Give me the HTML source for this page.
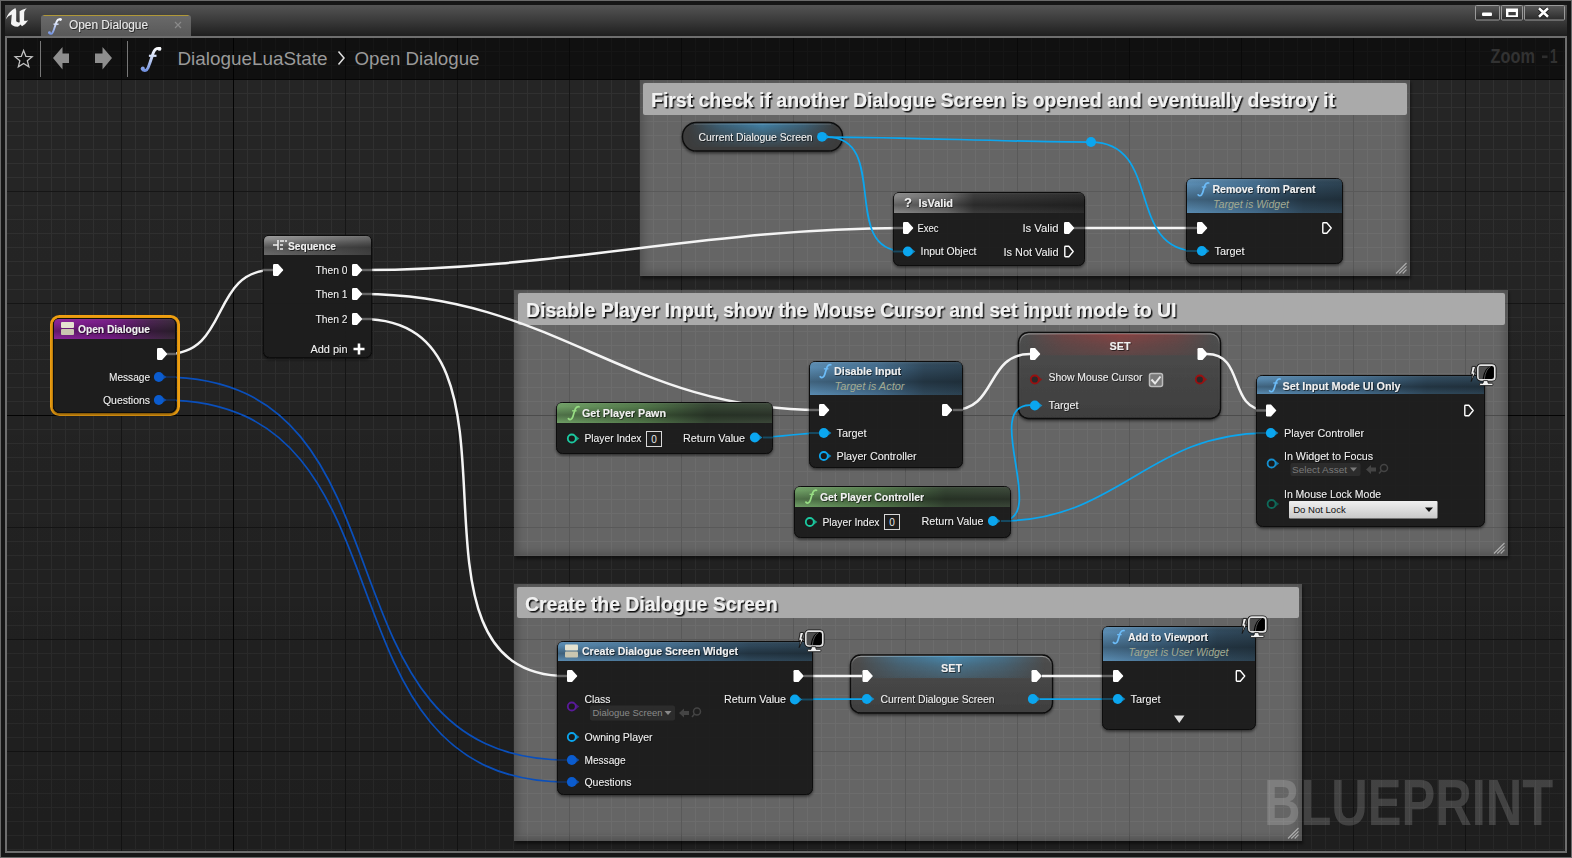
<!DOCTYPE html>
<html><head><meta charset="utf-8"><title>Open Dialogue</title>
<style>html,body{margin:0;padding:0;background:#161616;overflow:hidden;width:1572px;height:858px}svg{display:block;font-family:"Liberation Sans",sans-serif}</style>
</head><body><svg width="1572" height="858" viewBox="0 0 1572 858" font-family="Liberation Sans, sans-serif"><defs>
<filter id="tshadow" x="-5%" y="-30%" width="110%" height="160%"><feDropShadow dx="0.8" dy="0.8" stdDeviation="0.35" flood-color="#000" flood-opacity="0.7"/></filter>
<filter id="cshadow" x="-5%" y="-30%" width="110%" height="160%"><feDropShadow dx="1.5" dy="1.5" stdDeviation="0.15" flood-color="#000" flood-opacity="0.9"/></filter>
<filter id="blur4" x="-10%" y="-10%" width="120%" height="120%"><feGaussianBlur stdDeviation="4"/></filter>
<filter id="blur2" x="-10%" y="-10%" width="120%" height="130%"><feGaussianBlur stdDeviation="1.5"/></filter>
<filter id="nshadow" x="-10%" y="-10%" width="120%" height="130%"><feDropShadow dx="0" dy="1.5" stdDeviation="1.5" flood-color="#000" flood-opacity="0.6"/></filter>
<linearGradient id="titlebg" x1="0" y1="0" x2="0" y2="1"><stop offset="0" stop-color="#545454"/><stop offset="0.5" stop-color="#3a3a3a"/><stop offset="1" stop-color="#1e1e1e"/></linearGradient>
<linearGradient id="tabbg" x1="0" y1="0" x2="0" y2="1"><stop offset="0" stop-color="#6a6a6a"/><stop offset="1" stop-color="#595959"/></linearGradient>
<linearGradient id="graphshade" x1="0" y1="0" x2="0" y2="1"><stop offset="0" stop-color="#000" stop-opacity="0"/><stop offset="0.15" stop-color="#000" stop-opacity="0"/><stop offset="0.5" stop-color="#000" stop-opacity="0.07"/><stop offset="1" stop-color="#000" stop-opacity="0.2"/></linearGradient>
<linearGradient id="btnbg" x1="0" y1="0" x2="0" y2="1"><stop offset="0" stop-color="#5a5a5a"/><stop offset="1" stop-color="#2a2a2a"/></linearGradient>
<linearGradient id="fgradL" gradientUnits="userSpaceOnUse" x1="0" y1="0" x2="0" y2="24"><stop offset="0" stop-color="#ffffff"/><stop offset="0.4" stop-color="#d0dbf6"/><stop offset="1" stop-color="#7090e0"/></linearGradient>
<linearGradient id="fgrad" x1="0" y1="0" x2="0" y2="1"><stop offset="0" stop-color="#ffffff"/><stop offset="1" stop-color="#7f9fe8"/></linearGradient>
<linearGradient id="hdr_purple" x1="0" y1="0" x2="1" y2="0"><stop offset="0" stop-color="#8a249a"/><stop offset="0.5" stop-color="#741c84"/><stop offset="0.8" stop-color="#4a2450"/><stop offset="1" stop-color="#3a2a3c"/></linearGradient>
<linearGradient id="hdr_gray" x1="0" y1="0" x2="1" y2="1"><stop offset="0" stop-color="#9a9a9a"/><stop offset="0.5" stop-color="#6a6a6a"/><stop offset="1" stop-color="#3e3e3e"/></linearGradient>
<linearGradient id="hdr_isvalid" x1="0" y1="0" x2="1" y2="0"><stop offset="0" stop-color="#8a8a8a"/><stop offset="0.28" stop-color="#6a6a6a"/><stop offset="0.42" stop-color="#3c3c3c"/><stop offset="1" stop-color="#2c2c2c"/></linearGradient>
<linearGradient id="hdr_blue" x1="0" y1="0" x2="1" y2="0"><stop offset="0" stop-color="#5a8cb2"/><stop offset="0.45" stop-color="#446c8c"/><stop offset="0.75" stop-color="#30495c"/><stop offset="1" stop-color="#2c4252"/></linearGradient>
<linearGradient id="hdr_green" x1="0" y1="0" x2="1" y2="0"><stop offset="0" stop-color="#70a066"/><stop offset="0.4" stop-color="#52784a"/><stop offset="0.7" stop-color="#364634"/><stop offset="1" stop-color="#3a4638"/></linearGradient>
<linearGradient id="hdr_vshade" x1="0" y1="0" x2="0" y2="1"><stop offset="0" stop-color="#fff" stop-opacity="0.08"/><stop offset="0.15" stop-color="#000" stop-opacity="0"/><stop offset="0.6" stop-color="#000" stop-opacity="0.3"/><stop offset="1" stop-color="#000" stop-opacity="0.0"/></linearGradient>
<radialGradient id="setblue2" cx="0.5" cy="0" r="0.5" gradientTransform="translate(0 0) matrix(1 0 0 1.3 0 0)"><stop offset="0" stop-color="#4aa6dc" stop-opacity="0.95"/><stop offset="0.55" stop-color="#3a88b8" stop-opacity="0.45"/><stop offset="1" stop-color="#2d6a90" stop-opacity="0"/></radialGradient>
<linearGradient id="varbg" x1="0" y1="0" x2="0" y2="1"><stop offset="0" stop-color="#3a3e42"/><stop offset="0.25" stop-color="#3d83b5"/><stop offset="0.6" stop-color="#34495a"/><stop offset="1" stop-color="#2e3236"/></linearGradient>
<radialGradient id="setred" cx="0.5" cy="0" r="0.5" gradientTransform="matrix(1 0 0 0.35 0 0)"><stop offset="0" stop-color="#c04040" stop-opacity="0.75"/><stop offset="1" stop-color="#c04040" stop-opacity="0"/></radialGradient>
<radialGradient id="setblue" cx="0.5" cy="0" r="0.5" gradientTransform="matrix(1 0 0 0.45 0 0)"><stop offset="0" stop-color="#2d9ae0" stop-opacity="0.8"/><stop offset="1" stop-color="#2d9ae0" stop-opacity="0"/></radialGradient>
<linearGradient id="hband_blue" x1="0" y1="0" x2="1" y2="0"><stop offset="0" stop-color="#3d9ad2" stop-opacity="0"/><stop offset="0.22" stop-color="#3d9ad2" stop-opacity="0.42"/><stop offset="0.5" stop-color="#44a4dc" stop-opacity="0.7"/><stop offset="0.78" stop-color="#3d9ad2" stop-opacity="0.42"/><stop offset="1" stop-color="#3d9ad2" stop-opacity="0"/></linearGradient>
<linearGradient id="hband_red" x1="0" y1="0" x2="1" y2="0"><stop offset="0" stop-color="#a83434" stop-opacity="0"/><stop offset="0.2" stop-color="#a83434" stop-opacity="0.35"/><stop offset="0.5" stop-color="#b03a3a" stop-opacity="0.6"/><stop offset="0.8" stop-color="#a83434" stop-opacity="0.35"/><stop offset="1" stop-color="#a83434" stop-opacity="0"/></linearGradient>
<linearGradient id="vfade" x1="0" y1="0" x2="0" y2="1"><stop offset="0" stop-color="#fff" stop-opacity="1"/><stop offset="0.5" stop-color="#fff" stop-opacity="0.6"/><stop offset="1" stop-color="#fff" stop-opacity="0.35"/></linearGradient>
<linearGradient id="vfade2" x1="0" y1="0" x2="0" y2="1"><stop offset="0" stop-color="#fff" stop-opacity="1"/><stop offset="0.45" stop-color="#fff" stop-opacity="0.55"/><stop offset="1" stop-color="#fff" stop-opacity="0.12"/></linearGradient>
<mask id="mvfade2" maskContentUnits="objectBoundingBox"><rect x="0" y="0" width="1" height="1" fill="url(#vfade2)"/></mask>
<mask id="mvfade" maskContentUnits="objectBoundingBox"><rect x="0" y="0" width="1" height="1" fill="url(#vfade)"/></mask>
<linearGradient id="rimgrad" x1="0" y1="0" x2="0" y2="1"><stop offset="0" stop-color="#fff" stop-opacity="0.4"/><stop offset="0.12" stop-color="#fff" stop-opacity="0.05"/><stop offset="1" stop-color="#fff" stop-opacity="0"/></linearGradient>
<linearGradient id="setbody" x1="0" y1="0" x2="0" y2="1"><stop offset="0" stop-color="#4e4e4e"/><stop offset="1" stop-color="#3e3e3e"/></linearGradient>
<linearGradient id="ddbg" x1="0" y1="0" x2="0" y2="1"><stop offset="0" stop-color="#f0f0f0"/><stop offset="1" stop-color="#c8c8c8"/></linearGradient>
<clipPath id="cc640_80"><rect x="640" y="80" width="770" height="196"/></clipPath><clipPath id="cc514_290"><rect x="514" y="290" width="994" height="266"/></clipPath><clipPath id="cc514_584"><rect x="514" y="584" width="788" height="257"/></clipPath></defs><rect x="0" y="0" width="1572" height="858" fill="#161616"/><rect x="0.5" y="0.5" width="1571" height="857" fill="none" stroke="#6a6a6a" stroke-width="1"/><rect x="5" y="5" width="1562" height="31" fill="url(#titlebg)"/><rect x="7" y="38" width="1558" height="813" fill="#252525"/><path id="gridminor" d="M23.5,38V851M37.5,38V851M51.5,38V851M65.5,38V851M79.5,38V851M93.5,38V851M107.5,38V851M121.5,38V851M135.5,38V851M149.5,38V851M163.5,38V851M177.5,38V851M191.5,38V851M205.5,38V851M219.5,38V851M233.5,38V851M247.5,38V851M261.5,38V851M275.5,38V851M289.5,38V851M303.5,38V851M317.5,38V851M331.5,38V851M345.5,38V851M359.5,38V851M373.5,38V851M387.5,38V851M401.5,38V851M415.5,38V851M429.5,38V851M443.5,38V851M457.5,38V851M471.5,38V851M485.5,38V851M499.5,38V851M513.5,38V851M527.5,38V851M541.5,38V851M555.5,38V851M569.5,38V851M583.5,38V851M597.5,38V851M611.5,38V851M625.5,38V851M639.5,38V851M653.5,38V851M667.5,38V851M681.5,38V851M695.5,38V851M709.5,38V851M723.5,38V851M737.5,38V851M751.5,38V851M765.5,38V851M779.5,38V851M793.5,38V851M807.5,38V851M821.5,38V851M835.5,38V851M849.5,38V851M863.5,38V851M877.5,38V851M891.5,38V851M905.5,38V851M919.5,38V851M933.5,38V851M947.5,38V851M961.5,38V851M975.5,38V851M989.5,38V851M1003.5,38V851M1017.5,38V851M1031.5,38V851M1045.5,38V851M1059.5,38V851M1073.5,38V851M1087.5,38V851M1101.5,38V851M1115.5,38V851M1129.5,38V851M1143.5,38V851M1157.5,38V851M1171.5,38V851M1185.5,38V851M1199.5,38V851M1213.5,38V851M1227.5,38V851M1241.5,38V851M1255.5,38V851M1269.5,38V851M1283.5,38V851M1297.5,38V851M1311.5,38V851M1325.5,38V851M1339.5,38V851M1353.5,38V851M1367.5,38V851M1381.5,38V851M1395.5,38V851M1409.5,38V851M1423.5,38V851M1437.5,38V851M1451.5,38V851M1465.5,38V851M1479.5,38V851M1493.5,38V851M1507.5,38V851M1521.5,38V851M1535.5,38V851M1549.5,38V851M1563.5,38V851M7,51.5H1565M7,65.5H1565M7,79.5H1565M7,93.5H1565M7,107.5H1565M7,121.5H1565M7,135.5H1565M7,149.5H1565M7,163.5H1565M7,177.5H1565M7,191.5H1565M7,205.5H1565M7,219.5H1565M7,233.5H1565M7,247.5H1565M7,261.5H1565M7,275.5H1565M7,289.5H1565M7,303.5H1565M7,317.5H1565M7,331.5H1565M7,345.5H1565M7,359.5H1565M7,373.5H1565M7,387.5H1565M7,401.5H1565M7,415.5H1565M7,429.5H1565M7,443.5H1565M7,457.5H1565M7,471.5H1565M7,485.5H1565M7,499.5H1565M7,513.5H1565M7,527.5H1565M7,541.5H1565M7,555.5H1565M7,569.5H1565M7,583.5H1565M7,597.5H1565M7,611.5H1565M7,625.5H1565M7,639.5H1565M7,653.5H1565M7,667.5H1565M7,681.5H1565M7,695.5H1565M7,709.5H1565M7,723.5H1565M7,737.5H1565M7,751.5H1565M7,765.5H1565M7,779.5H1565M7,793.5H1565M7,807.5H1565M7,821.5H1565M7,835.5H1565M7,849.5H1565" stroke="#303030" stroke-width="1"/><path id="gridmajor" d="M121.5,38V851M233.5,38V851M345.5,38V851M457.5,38V851M569.5,38V851M681.5,38V851M793.5,38V851M905.5,38V851M1017.5,38V851M1129.5,38V851M1241.5,38V851M1353.5,38V851M1465.5,38V851M7,79.5H1565M7,191.5H1565M7,303.5H1565M7,415.5H1565M7,527.5H1565M7,639.5H1565M7,751.5H1565M233.5,38V851M7,415.5H1565" stroke="#161616" stroke-width="1"/><path id="gridaxis" d="M233.5,38V851M7,415.5H1565" stroke="#030303" stroke-width="1"/><rect x="7" y="38" width="1558" height="813" fill="url(#graphshade)"/><rect x="6" y="37" width="1560" height="815" fill="none" stroke="#6e6e6e" stroke-width="2"/><rect x="641" y="82" width="770" height="197" fill="#000" opacity="0.45" filter="url(#blur2)"/><rect x="640" y="80" width="770" height="196" fill="#262626"/><use href="#gridminor" clip-path="url(#cc640_80)"/><use href="#gridmajor" clip-path="url(#cc640_80)"/><use href="#gridaxis" clip-path="url(#cc640_80)"/><rect x="640" y="80" width="770" height="196" fill="#ffffff" fill-opacity="0.29"/><g clip-path="url(#cc640_80)"><rect x="636" y="76" width="778" height="204" fill="none" stroke="#000" stroke-opacity="0.22" stroke-width="14" filter="url(#blur4)"/></g><rect x="643" y="83" width="764" height="32" rx="2" fill="#aaaaaa"/><text x="651" y="107" font-size="21" fill="#f2f2f2" font-weight="bold" textLength="684" lengthAdjust="spacingAndGlyphs" filter="url(#cshadow)" >First check if another Dialogue Screen is opened and eventually destroy it</text><path d="M1396.0,273.5 L1406.5,263.0 M1399.3,273.5 L1406.5,266.3 M1402.7,273.5 L1406.5,269.7" stroke="#c8c8c8" stroke-width="1.1" opacity="0.75"/><rect x="515" y="292" width="994" height="267" fill="#000" opacity="0.45" filter="url(#blur2)"/><rect x="514" y="290" width="994" height="266" fill="#262626"/><use href="#gridminor" clip-path="url(#cc514_290)"/><use href="#gridmajor" clip-path="url(#cc514_290)"/><use href="#gridaxis" clip-path="url(#cc514_290)"/><rect x="514" y="290" width="994" height="266" fill="#ffffff" fill-opacity="0.29"/><g clip-path="url(#cc514_290)"><rect x="510" y="286" width="1002" height="274" fill="none" stroke="#000" stroke-opacity="0.22" stroke-width="14" filter="url(#blur4)"/></g><rect x="518" y="293" width="987" height="32" rx="2" fill="#aaaaaa"/><text x="526" y="317" font-size="21" fill="#f2f2f2" font-weight="bold" textLength="650.5" lengthAdjust="spacingAndGlyphs" filter="url(#cshadow)" >Disable Player Input, show the Mouse Cursor and set input mode to UI</text><path d="M1494.0,553.5 L1504.5,543.0 M1497.3,553.5 L1504.5,546.3 M1500.7,553.5 L1504.5,549.7" stroke="#c8c8c8" stroke-width="1.1" opacity="0.75"/><rect x="515" y="586" width="788" height="258" fill="#000" opacity="0.45" filter="url(#blur2)"/><rect x="514" y="584" width="788" height="257" fill="#262626"/><use href="#gridminor" clip-path="url(#cc514_584)"/><use href="#gridmajor" clip-path="url(#cc514_584)"/><use href="#gridaxis" clip-path="url(#cc514_584)"/><rect x="514" y="584" width="788" height="257" fill="#ffffff" fill-opacity="0.29"/><g clip-path="url(#cc514_584)"><rect x="510" y="580" width="796" height="265" fill="none" stroke="#000" stroke-opacity="0.22" stroke-width="14" filter="url(#blur4)"/></g><rect x="517" y="587" width="782" height="31" rx="2" fill="#aaaaaa"/><text x="525" y="611" font-size="21" fill="#f2f2f2" font-weight="bold" textLength="252.5" lengthAdjust="spacingAndGlyphs" filter="url(#cshadow)" >Create the Dialogue Screen</text><path d="M1288.0,838.5 L1298.5,828.0 M1291.3,838.5 L1298.5,831.3 M1294.7,838.5 L1298.5,834.7" stroke="#c8c8c8" stroke-width="1.1" opacity="0.75"/><rect x="682.5" y="122.5" width="160" height="28.5" rx="14" fill="#3c3c3c" fill-opacity="0.95" stroke="#0e0e0e" stroke-width="1.4" filter="url(#nshadow)"/><rect x="688" y="123.2" width="149" height="24" fill="url(#hband_blue)" mask="url(#mvfade2)"/><path d="M694,124.2 H831" stroke="#fff" stroke-opacity="0.15" stroke-width="1"/><text x="698.5" y="141" font-size="10.5" fill="#f0f0f0" textLength="114" lengthAdjust="spacingAndGlyphs" filter="url(#tshadow)" >Current Dialogue Screen</text><path d="M826.2,134.20000000000002 L829.6,136.8 L826.2,139.4 Z" fill="#0ba6ef" opacity="0.75"/><circle cx="822.0" cy="136.8" r="4.9" fill="#0ba6ef"/><rect x="1018.5" y="332.5" width="202" height="86" rx="10" fill="url(#setbody)" fill-opacity="0.94" stroke="#0c0c0c" stroke-width="1.3" filter="url(#nshadow)"/><rect x="1019.8" y="333.8" width="199.4" height="83.4" rx="9" fill="none" stroke="url(#rimgrad)" stroke-width="1.2"/><rect x="1026" y="333.5" width="187" height="22" fill="url(#hband_red)" mask="url(#mvfade)"/><text x="1120" y="350.3" font-size="11" fill="#f0f0f0" font-weight="bold" text-anchor="middle" textLength="21" lengthAdjust="spacingAndGlyphs" filter="url(#tshadow)" >SET</text><path d="M1031.2,348 L1035,348 L1040,353.4 Q1040.5,354 1040,354.6 L1035,360 L1031.2,360 Q1030,360 1030,358.8 L1030,349.2 Q1030,348 1031.2,348 Z" fill="#fff"/><path d="M1198.7,348 L1202.5,348 L1207.5,353.4 Q1208.0,354 1207.5,354.6 L1202.5,360 L1198.7,360 Q1197.5,360 1197.5,358.8 L1197.5,349.2 Q1197.5,348 1198.7,348 Z" fill="#fff"/><path d="M1039,376.9 L1042.4,379.5 L1039,382.1 Z" fill="#9a1010" opacity="0.75"/><circle cx="1034.8" cy="379.5" r="4.0" fill="#2a2a2a" stroke="#9a1010" stroke-width="1.8"/><text x="1048.5" y="381" font-size="10.5" fill="#f0f0f0" textLength="94" lengthAdjust="spacingAndGlyphs" filter="url(#tshadow)" >Show Mouse Cursor</text><rect x="1149.5" y="373.5" width="13" height="13" rx="2" fill="#7a7a7a" stroke="#bdbdbd" stroke-width="1.5"/><path d="M1151.5,379.5 l3.5,4 l5.5,-7" fill="none" stroke="#e8e8e8" stroke-width="2"/><path d="M1204,376.9 L1207.4,379.5 L1204,382.1 Z" fill="#9a1010" opacity="0.75"/><circle cx="1199.8" cy="379.5" r="4.0" fill="#2a2a2a" stroke="#9a1010" stroke-width="1.8"/><path d="M1039,402.9 L1042.4,405.5 L1039,408.1 Z" fill="#0ba6ef" opacity="0.75"/><circle cx="1034.8" cy="405.5" r="4.9" fill="#0ba6ef"/><text x="1048.5" y="409" font-size="10.5" fill="#f0f0f0" textLength="30" lengthAdjust="spacingAndGlyphs" filter="url(#tshadow)" >Target</text><rect x="850.5" y="655" width="202" height="58" rx="10" fill="url(#setbody)" fill-opacity="0.94" stroke="#0c0c0c" stroke-width="1.3" filter="url(#nshadow)"/><rect x="851.8" y="656.3" width="199.4" height="55.4" rx="9" fill="none" stroke="url(#rimgrad)" stroke-width="1.2"/><rect x="858" y="656" width="187" height="22" fill="url(#hband_blue)" mask="url(#mvfade)"/><text x="951.5" y="672.3" font-size="11" fill="#f0f0f0" font-weight="bold" text-anchor="middle" textLength="21" lengthAdjust="spacingAndGlyphs" filter="url(#tshadow)" >SET</text><path d="M863.7,670 L867.5,670 L872.5,675.4 Q873.0,676 872.5,676.6 L867.5,682 L863.7,682 Q862.5,682 862.5,680.8 L862.5,671.2 Q862.5,670 863.7,670 Z" fill="#fff"/><path d="M1032.7,670 L1036.5,670 L1041.5,675.4 Q1042.0,676 1041.5,676.6 L1036.5,682 L1032.7,682 Q1031.5,682 1031.5,680.8 L1031.5,671.2 Q1031.5,670 1032.7,670 Z" fill="#fff"/><path d="M871,696.4 L874.4,699 L871,701.6 Z" fill="#0ba6ef" opacity="0.75"/><circle cx="866.8" cy="699" r="4.9" fill="#0ba6ef"/><text x="880.5" y="703" font-size="10.5" fill="#f0f0f0" textLength="114" lengthAdjust="spacingAndGlyphs" filter="url(#tshadow)" >Current Dialogue Screen</text><path d="M1037,696.4 L1040.4,699 L1037,701.6 Z" fill="#0ba6ef" opacity="0.75"/><circle cx="1032.8" cy="699" r="4.9" fill="#0ba6ef"/><path d="M167,354 C230.33333333333334,354 209.66666666666666,270 273,270" fill="none" stroke="#f4f4f4" stroke-width="2.5" opacity="1.0"/><path d="M362,270 C556.3333333333334,270 708.6666666666666,228 903,228" fill="none" stroke="#f4f4f4" stroke-width="2.5" opacity="1.0"/><path d="M362,294 C553.0,294 628.0,410 819,410" fill="none" stroke="#f4f4f4" stroke-width="2.5" opacity="1.0"/><path d="M362,319 C549.3333333333334,319 379.66666666666663,676 567,676" fill="none" stroke="#f4f4f4" stroke-width="2.5" opacity="1.0"/><path d="M1074,228 C1115.0,228 1156.0,228 1197,228" fill="none" stroke="#f4f4f4" stroke-width="2.5" opacity="1.0"/><path d="M953,410 C997.3333333333334,410 985.6666666666666,354 1030,354" fill="none" stroke="#f4f4f4" stroke-width="2.5" opacity="1.0"/><path d="M1207,354 C1245.3333333333333,354 1227.6666666666667,410 1266,410" fill="none" stroke="#f4f4f4" stroke-width="2.5" opacity="1.0"/><path d="M804,676 C823.3333333333334,676 842.6666666666666,676 862,676" fill="none" stroke="#f4f4f4" stroke-width="2.5" opacity="1.0"/><path d="M1042,676 C1065.6666666666667,676 1089.3333333333333,676 1113,676" fill="none" stroke="#f4f4f4" stroke-width="2.5" opacity="1.0"/><path d="M827,137 C890.3333333333334,137 839.6666666666666,251 903,251" fill="none" stroke="#0ba6ef" stroke-width="1.75" opacity="1.0"/><path d="M827,137 C916.6666666666666,137 1001.3333333333334,142 1091,142" fill="none" stroke="#0ba6ef" stroke-width="1.75" opacity="1.0"/><path d="M1091,142 C1162.6666666666667,142 1125.3333333333333,251 1197,251" fill="none" stroke="#0ba6ef" stroke-width="1.75" opacity="1.0"/><path d="M763,437 C783.0,437 799.0,433 819,433" fill="none" stroke="#0ba6ef" stroke-width="1.75" opacity="1.0"/><path d="M1001,521 C1049.3333333333333,521 981.6666666666666,405 1030,405" fill="none" stroke="#0ba6ef" stroke-width="1.75" opacity="1.0"/><path d="M1001,521 C1118.6666666666667,521 1148.3333333333333,433 1266,433" fill="none" stroke="#0ba6ef" stroke-width="1.75" opacity="1.0"/><path d="M802,699 C822.0,699 842.0,699 862,699" fill="none" stroke="#0ba6ef" stroke-width="1.75" opacity="1.0"/><path d="M1040,699 C1064.3333333333333,699 1088.6666666666667,699 1113,699" fill="none" stroke="#0ba6ef" stroke-width="1.75" opacity="1.0"/><path d="M164,377 C426.0,377 305.0,760 567,760" fill="none" stroke="#0a4fbb" stroke-width="1.75" opacity="1.0"/><path d="M164,400 C425.6666666666667,400 305.3333333333333,782 567,782" fill="none" stroke="#0a4fbb" stroke-width="1.75" opacity="1.0"/><circle cx="1091" cy="142" r="5" fill="#0ba6ef"/><rect x="51.5" y="316.5" width="127" height="98" rx="8" fill="none" stroke="#f0a010" stroke-width="3"/><rect x="53.5" y="318.5" width="122" height="94" rx="6" fill="#1b1c1b" fill-opacity="0.95" stroke="#070707" stroke-width="1" filter="url(#nshadow)"/><path d="M59,319 H170 Q175,319 175,324 V339 H54 V324 Q54,319 59,319 Z" fill="url(#hdr_purple)"/><path d="M59,319 H170 Q175,319 175,324 V339 H54 V324 Q54,319 59,319 Z" fill="url(#hdr_vshade)"/><rect x="61" y="322" width="13" height="6" rx="1" fill="#e4e2d0"/><rect x="61" y="329" width="13" height="6" rx="1" fill="#c9c6b0"/><text x="78" y="333" font-size="11.5" fill="#f0f0f0" font-weight="bold" textLength="72" lengthAdjust="spacingAndGlyphs" filter="url(#tshadow)" >Open Dialogue</text><path d="M158.2,348 L162,348 L167,353.4 Q167.5,354 167,354.6 L162,360 L158.2,360 Q157,360 157,358.8 L157,349.2 Q157,348 158.2,348 Z" fill="#fff"/><path d="M163,374.4 L166.4,377 L163,379.6 Z" fill="#0b5ccf" opacity="0.75"/><circle cx="158.8" cy="377" r="4.9" fill="#0b5ccf"/><path d="M163,397.4 L166.4,400 L163,402.6 Z" fill="#0b5ccf" opacity="0.75"/><circle cx="158.8" cy="400" r="4.9" fill="#0b5ccf"/><text x="150" y="381" font-size="10.5" fill="#f0f0f0" text-anchor="end" textLength="41" lengthAdjust="spacingAndGlyphs" filter="url(#tshadow)" >Message</text><text x="150" y="404" font-size="10.5" fill="#f0f0f0" text-anchor="end" textLength="47" lengthAdjust="spacingAndGlyphs" filter="url(#tshadow)" >Questions</text><rect x="263.5" y="235.5" width="108" height="122" rx="6" fill="#1b1c1b" fill-opacity="0.95" stroke="#070707" stroke-width="1" filter="url(#nshadow)"/><path d="M269,236 H366 Q371,236 371,241 V255 H264 V241 Q264,236 269,236 Z" fill="url(#hdr_gray)"/><path d="M269,236 H366 Q371,236 371,241 V255 H264 V241 Q264,236 269,236 Z" fill="url(#hdr_vshade)"/><text x="288" y="249.5" font-size="11.5" fill="#f0f0f0" font-weight="bold" textLength="48" lengthAdjust="spacingAndGlyphs" filter="url(#tshadow)" >Sequence</text><path d="M273,245h5M278,240v10M280,241h4M280,245h3M280,249h3M285,241h2" stroke="#eee" stroke-width="1.5"/><path d="M274.2,264 L278,264 L283,269.4 Q283.5,270 283,270.6 L278,276 L274.2,276 Q273,276 273,274.8 L273,265.2 Q273,264 274.2,264 Z" fill="#fff"/><path d="M353.2,264 L357,264 L362,269.4 Q362.5,270 362,270.6 L357,276 L353.2,276 Q352,276 352,274.8 L352,265.2 Q352,264 353.2,264 Z" fill="#fff"/><text x="347.5" y="274" font-size="10.5" fill="#f0f0f0" text-anchor="end" textLength="32" lengthAdjust="spacingAndGlyphs" filter="url(#tshadow)" >Then 0</text><path d="M353.2,288 L357,288 L362,293.4 Q362.5,294 362,294.6 L357,300 L353.2,300 Q352,300 352,298.8 L352,289.2 Q352,288 353.2,288 Z" fill="#fff"/><text x="347.5" y="298" font-size="10.5" fill="#f0f0f0" text-anchor="end" textLength="32" lengthAdjust="spacingAndGlyphs" filter="url(#tshadow)" >Then 1</text><path d="M353.2,313 L357,313 L362,318.4 Q362.5,319 362,319.6 L357,325 L353.2,325 Q352,325 352,323.8 L352,314.2 Q352,313 353.2,313 Z" fill="#fff"/><text x="347.5" y="323" font-size="10.5" fill="#f0f0f0" text-anchor="end" textLength="32" lengthAdjust="spacingAndGlyphs" filter="url(#tshadow)" >Then 2</text><text x="347.5" y="353" font-size="10.5" fill="#f0f0f0" text-anchor="end" textLength="37" lengthAdjust="spacingAndGlyphs" filter="url(#tshadow)" >Add pin</text><path d="M359,343.5v11M353.5,349h11" stroke="#fff" stroke-width="2.6"/><rect x="893.5" y="192.5" width="191" height="73" rx="6" fill="#1b1c1b" fill-opacity="0.95" stroke="#070707" stroke-width="1" filter="url(#nshadow)"/><path d="M899,193 H1079 Q1084,193 1084,198 V213 H894 V198 Q894,193 899,193 Z" fill="url(#hdr_isvalid)"/><path d="M899,193 H1079 Q1084,193 1084,198 V213 H894 V198 Q894,193 899,193 Z" fill="url(#hdr_vshade)"/><text x="904" y="207" font-size="13" fill="#eee" font-weight="bold" filter="url(#tshadow)" >?</text><text x="918.5" y="207" font-size="11.5" fill="#f0f0f0" font-weight="bold" textLength="34.5" lengthAdjust="spacingAndGlyphs" filter="url(#tshadow)" >IsValid</text><path d="M904.2,222 L908,222 L913,227.4 Q913.5,228 913,228.6 L908,234 L904.2,234 Q903,234 903,232.8 L903,223.2 Q903,222 904.2,222 Z" fill="#fff"/><text x="917.5" y="232" font-size="10.5" fill="#f0f0f0" textLength="21" lengthAdjust="spacingAndGlyphs" filter="url(#tshadow)" >Exec</text><text x="1058.5" y="232" font-size="10.5" fill="#f0f0f0" text-anchor="end" textLength="36" lengthAdjust="spacingAndGlyphs" filter="url(#tshadow)" >Is Valid</text><path d="M1065.2,222 L1069,222 L1074,227.4 Q1074.5,228 1074,228.6 L1069,234 L1065.2,234 Q1064,234 1064,232.8 L1064,223.2 Q1064,222 1065.2,222 Z" fill="#fff"/><path d="M912,248.9 L915.4,251.5 L912,254.1 Z" fill="#0ba6ef" opacity="0.75"/><circle cx="907.8" cy="251.5" r="4.9" fill="#0ba6ef"/><text x="920.5" y="255" font-size="10.5" fill="#f0f0f0" textLength="56" lengthAdjust="spacingAndGlyphs" filter="url(#tshadow)" >Input Object</text><text x="1058.5" y="255.5" font-size="10.5" fill="#f0f0f0" text-anchor="end" textLength="55" lengthAdjust="spacingAndGlyphs" filter="url(#tshadow)" >Is Not Valid</text><path d="M1065.5,246.3 L1068.8,246.3 L1073.2,251.5 L1068.8,256.7 L1065.5,256.7 Q1064.8,256.7 1064.8,256.0 L1064.8,247.0 Q1064.8,246.3 1065.5,246.3 Z" fill="none" stroke="#fff" stroke-width="1.4" stroke-linejoin="round"/><rect x="1186.5" y="178.5" width="156" height="85" rx="6" fill="#1b1c1b" fill-opacity="0.95" stroke="#070707" stroke-width="1" filter="url(#nshadow)"/><path d="M1192,179 H1337 Q1342,179 1342,184 V213 H1187 V184 Q1187,179 1192,179 Z" fill="url(#hdr_blue)"/><path d="M1192,179 H1337 Q1342,179 1342,184 V213 H1187 V184 Q1187,179 1192,179 Z" fill="url(#hdr_vshade)"/><path d="M1198.1,194.79999999999998 Q1199.7,196.79999999999998 1201.7,194.6 Q1202.7,193.2 1203.5,189.7 L1204.9,185.39999999999998 Q1206.3,182.39999999999998 1208.7,183.0" fill="none" stroke="#6cbcf8" stroke-width="1.7" stroke-linecap="round"/><path d="M1201.8,187.0 H1206.3" stroke="#6cbcf8" stroke-width="1.3"/><text x="1212.5" y="192.8" font-size="11.5" fill="#f0f0f0" font-weight="bold" textLength="103" lengthAdjust="spacingAndGlyphs" filter="url(#tshadow)" >Remove from Parent</text><text x="1213" y="208" font-size="10.5" fill="#a3ab92" font-style="italic" textLength="76" lengthAdjust="spacingAndGlyphs" >Target is Widget</text><path d="M1198.2,222 L1202,222 L1207,227.4 Q1207.5,228 1207,228.6 L1202,234 L1198.2,234 Q1197,234 1197,232.8 L1197,223.2 Q1197,222 1198.2,222 Z" fill="#fff"/><path d="M1323.5,222.8 L1326.8,222.8 L1331.2,228 L1326.8,233.2 L1323.5,233.2 Q1322.8,233.2 1322.8,232.5 L1322.8,223.5 Q1322.8,222.8 1323.5,222.8 Z" fill="none" stroke="#fff" stroke-width="1.4" stroke-linejoin="round"/><path d="M1206,248.4 L1209.4,251 L1206,253.6 Z" fill="#0ba6ef" opacity="0.75"/><circle cx="1201.8" cy="251" r="4.9" fill="#0ba6ef"/><text x="1214.5" y="255" font-size="10.5" fill="#f0f0f0" textLength="30" lengthAdjust="spacingAndGlyphs" filter="url(#tshadow)" >Target</text><rect x="556.5" y="402.5" width="216" height="51" rx="6" fill="#1b1c1b" fill-opacity="0.95" stroke="#070707" stroke-width="1" filter="url(#nshadow)"/><path d="M562,403 H767 Q772,403 772,408 V423 H557 V408 Q557,403 562,403 Z" fill="url(#hdr_green)"/><path d="M562,403 H767 Q772,403 772,408 V423 H557 V408 Q557,403 562,403 Z" fill="url(#hdr_vshade)"/><path d="M568.4,418.6 Q570.0,420.6 572.0,418.4 Q573.0,417 573.8,413.5 L575.1999999999999,409.2 Q576.5999999999999,406.2 579.0,406.8" fill="none" stroke="#98de84" stroke-width="1.7" stroke-linecap="round"/><path d="M572.0999999999999,410.8 H576.5999999999999" stroke="#98de84" stroke-width="1.3"/><text x="582" y="417" font-size="11.5" fill="#f0f0f0" font-weight="bold" textLength="84" lengthAdjust="spacingAndGlyphs" filter="url(#tshadow)" >Get Player Pawn</text><path d="M576,435.9 L579.4,438.5 L576,441.1 Z" fill="#1bc9a0" opacity="0.75"/><circle cx="571.8" cy="438.5" r="4.0" fill="#1a1a1a" stroke="#1bc9a0" stroke-width="1.8"/><text x="584.5" y="442" font-size="10.5" fill="#f0f0f0" textLength="57" lengthAdjust="spacingAndGlyphs" filter="url(#tshadow)" >Player Index</text><rect x="646.5" y="431.5" width="15" height="15" fill="none" stroke="#d8d8d8" stroke-width="1"/><text x="654" y="443" font-size="10" fill="#e8e8e8" text-anchor="middle" >0</text><text x="745" y="442" font-size="10.5" fill="#f0f0f0" text-anchor="end" textLength="62" lengthAdjust="spacingAndGlyphs" filter="url(#tshadow)" >Return Value</text><path d="M759,434.9 L762.4,437.5 L759,440.1 Z" fill="#0ba6ef" opacity="0.75"/><circle cx="754.8" cy="437.5" r="4.9" fill="#0ba6ef"/><rect x="809.5" y="361.5" width="153" height="106" rx="6" fill="#1b1c1b" fill-opacity="0.95" stroke="#070707" stroke-width="1" filter="url(#nshadow)"/><path d="M815,362 H957 Q962,362 962,367 V395 H810 V367 Q810,362 815,362 Z" fill="url(#hdr_blue)"/><path d="M815,362 H957 Q962,362 962,367 V395 H810 V367 Q810,362 815,362 Z" fill="url(#hdr_vshade)"/><path d="M820.2,376.6 Q821.8000000000001,378.6 823.8000000000001,376.4 Q824.8000000000001,375 825.6,371.5 L827.0,367.2 Q828.4,364.2 830.8000000000001,364.8" fill="none" stroke="#6cbcf8" stroke-width="1.7" stroke-linecap="round"/><path d="M823.9,368.8 H828.4" stroke="#6cbcf8" stroke-width="1.3"/><text x="834" y="374.6" font-size="11.5" fill="#f0f0f0" font-weight="bold" textLength="67" lengthAdjust="spacingAndGlyphs" filter="url(#tshadow)" >Disable Input</text><text x="834.5" y="390" font-size="10.5" fill="#a3ab92" font-style="italic" textLength="70" lengthAdjust="spacingAndGlyphs" >Target is Actor</text><path d="M820.2,404 L824,404 L829,409.4 Q829.5,410 829,410.6 L824,416 L820.2,416 Q819,416 819,414.8 L819,405.2 Q819,404 820.2,404 Z" fill="#fff"/><path d="M943.2,404 L947,404 L952,409.4 Q952.5,410 952,410.6 L947,416 L943.2,416 Q942,416 942,414.8 L942,405.2 Q942,404 943.2,404 Z" fill="#fff"/><path d="M828,430.4 L831.4,433 L828,435.6 Z" fill="#0ba6ef" opacity="0.75"/><circle cx="823.8" cy="433" r="4.9" fill="#0ba6ef"/><text x="836.5" y="437" font-size="10.5" fill="#f0f0f0" textLength="30" lengthAdjust="spacingAndGlyphs" filter="url(#tshadow)" >Target</text><path d="M828,453.4 L831.4,456 L828,458.6 Z" fill="#0ba6ef" opacity="0.75"/><circle cx="823.8" cy="456" r="4.0" fill="#1a1a1a" stroke="#0ba6ef" stroke-width="1.8"/><text x="836.5" y="460" font-size="10.5" fill="#f0f0f0" textLength="80" lengthAdjust="spacingAndGlyphs" filter="url(#tshadow)" >Player Controller</text><rect x="794.5" y="486.5" width="216" height="51" rx="6" fill="#1b1c1b" fill-opacity="0.95" stroke="#070707" stroke-width="1" filter="url(#nshadow)"/><path d="M800,487 H1005 Q1010,487 1010,492 V507 H795 V492 Q795,487 800,487 Z" fill="url(#hdr_green)"/><path d="M800,487 H1005 Q1010,487 1010,492 V507 H795 V492 Q795,487 800,487 Z" fill="url(#hdr_vshade)"/><path d="M805.9,502.1 Q807.5,504.1 809.5,501.9 Q810.5,500.5 811.3,497.0 L812.6999999999999,492.7 Q814.0999999999999,489.7 816.5,490.3" fill="none" stroke="#98de84" stroke-width="1.7" stroke-linecap="round"/><path d="M809.5999999999999,494.3 H814.0999999999999" stroke="#98de84" stroke-width="1.3"/><text x="820" y="501" font-size="11.5" fill="#f0f0f0" font-weight="bold" textLength="104" lengthAdjust="spacingAndGlyphs" filter="url(#tshadow)" >Get Player Controller</text><path d="M814,519.4 L817.4,522 L814,524.6 Z" fill="#1bc9a0" opacity="0.75"/><circle cx="809.8" cy="522" r="4.0" fill="#1a1a1a" stroke="#1bc9a0" stroke-width="1.8"/><text x="822.5" y="526" font-size="10.5" fill="#f0f0f0" textLength="57" lengthAdjust="spacingAndGlyphs" filter="url(#tshadow)" >Player Index</text><rect x="884.5" y="514.5" width="15" height="15" fill="none" stroke="#d8d8d8" stroke-width="1"/><text x="892" y="526" font-size="10" fill="#e8e8e8" text-anchor="middle" >0</text><text x="983.5" y="525" font-size="10.5" fill="#f0f0f0" text-anchor="end" textLength="62" lengthAdjust="spacingAndGlyphs" filter="url(#tshadow)" >Return Value</text><path d="M997,518.4 L1000.4,521 L997,523.6 Z" fill="#0ba6ef" opacity="0.75"/><circle cx="992.8" cy="521" r="4.9" fill="#0ba6ef"/><rect x="1256.5" y="375.5" width="228" height="151" rx="6" fill="#1b1c1b" fill-opacity="0.95" stroke="#070707" stroke-width="1" filter="url(#nshadow)"/><path d="M1262,376 H1479 Q1484,376 1484,381 V394 H1257 V381 Q1257,376 1262,376 Z" fill="url(#hdr_blue)"/><path d="M1262,376 H1479 Q1484,376 1484,381 V394 H1257 V381 Q1257,376 1262,376 Z" fill="url(#hdr_vshade)"/><path d="M1269.6,390.8 Q1271.2,392.8 1273.2,390.59999999999997 Q1274.2,389.2 1275,385.7 L1276.4,381.4 Q1277.8,378.4 1280.2,379.0" fill="none" stroke="#6cbcf8" stroke-width="1.7" stroke-linecap="round"/><path d="M1273.3,383.0 H1277.8" stroke="#6cbcf8" stroke-width="1.3"/><text x="1282.5" y="389.5" font-size="11.5" fill="#f0f0f0" font-weight="bold" textLength="118" lengthAdjust="spacingAndGlyphs" filter="url(#tshadow)" >Set Input Mode UI Only</text><path d="M1267.2,404.5 L1271,404.5 L1276,409.9 Q1276.5,410.5 1276,411.1 L1271,416.5 L1267.2,416.5 Q1266,416.5 1266,415.3 L1266,405.7 Q1266,404.5 1267.2,404.5 Z" fill="#fff"/><path d="M1465.5,405.3 L1468.8,405.3 L1473.2,410.5 L1468.8,415.7 L1465.5,415.7 Q1464.8,415.7 1464.8,415.0 L1464.8,406.0 Q1464.8,405.3 1465.5,405.3 Z" fill="none" stroke="#fff" stroke-width="1.4" stroke-linejoin="round"/><path d="M1275,430.4 L1278.4,433 L1275,435.6 Z" fill="#0ba6ef" opacity="0.75"/><circle cx="1270.8" cy="433" r="4.9" fill="#0ba6ef"/><text x="1284" y="437" font-size="10.5" fill="#f0f0f0" textLength="80" lengthAdjust="spacingAndGlyphs" filter="url(#tshadow)" >Player Controller</text><path d="M1275.8,460.9 L1279.2,463.5 L1275.8,466.1 Z" fill="#1590d0" opacity="0.75"/><circle cx="1271.6" cy="463.5" r="4.0" fill="#1a1a1a" stroke="#1590d0" stroke-width="1.8"/><text x="1284" y="460" font-size="10.5" fill="#f0f0f0" textLength="89" lengthAdjust="spacingAndGlyphs" filter="url(#tshadow)" >In Widget to Focus</text><rect x="1290.5" y="463" width="70" height="13" rx="2" fill="#2c2c2c"/><text x="1292" y="473" font-size="9.5" fill="#7a7a7a" textLength="55" lengthAdjust="spacingAndGlyphs" >Select Asset</text><path d="M1350,467.5 l3.5,4 l3.5,-4 z" fill="#7a7a7a"/><path d="M1366,469.5 l5,-4.5 v2.5 h5 v4 h-5 v2.5 z" fill="#444"/><circle cx="1384" cy="468" r="3.5" fill="none" stroke="#444" stroke-width="1.5"/><path d="M1381.5,470.5 l-2.5,3" stroke="#444" stroke-width="1.5"/><path d="M1275.8,501.4 L1279.2,504 L1275.8,506.6 Z" fill="#0e6a5a" opacity="0.75"/><circle cx="1271.6" cy="504" r="4.0" fill="#1a1a1a" stroke="#0e6a5a" stroke-width="1.8"/><text x="1284" y="497.5" font-size="10.5" fill="#f0f0f0" textLength="97" lengthAdjust="spacingAndGlyphs" filter="url(#tshadow)" >In Mouse Lock Mode</text><rect x="1289" y="501" width="148.5" height="17.5" rx="1" fill="url(#ddbg)"/><text x="1293.2" y="512.8" font-size="9.5" fill="#111" textLength="52.5" lengthAdjust="spacingAndGlyphs" >Do Not Lock</text><path d="M1425,507.5 h8 l-4,4.5 z" fill="#111"/><rect x="557.5" y="641.5" width="255" height="153" rx="6" fill="#1b1c1b" fill-opacity="0.95" stroke="#070707" stroke-width="1" filter="url(#nshadow)"/><path d="M563,642 H807 Q812,642 812,647 V661 H558 V647 Q558,642 563,642 Z" fill="url(#hdr_blue)"/><path d="M563,642 H807 Q812,642 812,647 V661 H558 V647 Q558,642 563,642 Z" fill="url(#hdr_vshade)"/><rect x="565" y="644.5" width="13" height="6" rx="1" fill="#e4e2d0"/><rect x="565" y="651.5" width="13" height="6" rx="1" fill="#c9c6b0"/><text x="582" y="654.6" font-size="11.5" fill="#f0f0f0" font-weight="bold" textLength="156" lengthAdjust="spacingAndGlyphs" filter="url(#tshadow)" >Create Dialogue Screen Widget</text><path d="M568.2,670 L572,670 L577,675.4 Q577.5,676 577,676.6 L572,682 L568.2,682 Q567,682 567,680.8 L567,671.2 Q567,670 568.2,670 Z" fill="#fff"/><path d="M794.7,670 L798.5,670 L803.5,675.4 Q804.0,676 803.5,676.6 L798.5,682 L794.7,682 Q793.5,682 793.5,680.8 L793.5,671.2 Q793.5,670 794.7,670 Z" fill="#fff"/><path d="M576,703.9 L579.4,706.5 L576,709.1 Z" fill="#5a1a9a" opacity="0.75"/><circle cx="571.8" cy="706.5" r="4.0" fill="#1a1a1a" stroke="#5a1a9a" stroke-width="1.8"/><text x="584.5" y="702.6" font-size="10.5" fill="#f0f0f0" textLength="26" lengthAdjust="spacingAndGlyphs" filter="url(#tshadow)" >Class</text><rect x="590" y="705.5" width="85" height="15" rx="2" fill="#2c2c2c"/><text x="592.5" y="716" font-size="9.5" fill="#8a8a8a" textLength="70" lengthAdjust="spacingAndGlyphs" >Dialogue Screen</text><path d="M664.5,711 l3.5,4 l3.5,-4 z" fill="#8a8a8a"/><path d="M679,713 l5,-4.5 v2.5 h5 v4 h-5 v2.5 z" fill="#444"/><circle cx="697" cy="711.5" r="3.5" fill="none" stroke="#444" stroke-width="1.5"/><path d="M694.5,714 l-2.5,3" stroke="#444" stroke-width="1.5"/><text x="786" y="702.6" font-size="10.5" fill="#f0f0f0" text-anchor="end" textLength="62" lengthAdjust="spacingAndGlyphs" filter="url(#tshadow)" >Return Value</text><path d="M799,696.9 L802.4,699.5 L799,702.1 Z" fill="#0ba6ef" opacity="0.75"/><circle cx="794.8" cy="699.5" r="4.9" fill="#0ba6ef"/><path d="M576,734.4 L579.4,737 L576,739.6 Z" fill="#0ba6ef" opacity="0.75"/><circle cx="571.8" cy="737" r="4.0" fill="#1a1a1a" stroke="#0ba6ef" stroke-width="1.8"/><text x="584.5" y="741" font-size="10.5" fill="#f0f0f0" textLength="68" lengthAdjust="spacingAndGlyphs" filter="url(#tshadow)" >Owning Player</text><path d="M576,757.4 L579.4,760 L576,762.6 Z" fill="#0b5ccf" opacity="0.75"/><circle cx="571.8" cy="760" r="4.9" fill="#0b5ccf"/><text x="584.5" y="764" font-size="10.5" fill="#f0f0f0" textLength="41" lengthAdjust="spacingAndGlyphs" filter="url(#tshadow)" >Message</text><path d="M576,779.4 L579.4,782 L576,784.6 Z" fill="#0b5ccf" opacity="0.75"/><circle cx="571.8" cy="782" r="4.9" fill="#0b5ccf"/><text x="584.5" y="786" font-size="10.5" fill="#f0f0f0" textLength="47" lengthAdjust="spacingAndGlyphs" filter="url(#tshadow)" >Questions</text><rect x="1102.5" y="626.5" width="153" height="103" rx="6" fill="#1b1c1b" fill-opacity="0.95" stroke="#070707" stroke-width="1" filter="url(#nshadow)"/><path d="M1108,627 H1250 Q1255,627 1255,632 V661 H1103 V632 Q1103,627 1108,627 Z" fill="url(#hdr_blue)"/><path d="M1108,627 H1250 Q1255,627 1255,632 V661 H1103 V632 Q1103,627 1108,627 Z" fill="url(#hdr_vshade)"/><path d="M1113.3999999999999,642.4 Q1115.0,644.4 1117.0,642.1999999999999 Q1118.0,640.8 1118.8,637.3 L1120.2,633.0 Q1121.6,630.0 1124.0,630.5999999999999" fill="none" stroke="#6cbcf8" stroke-width="1.7" stroke-linecap="round"/><path d="M1117.1,634.5999999999999 H1121.6" stroke="#6cbcf8" stroke-width="1.3"/><text x="1128" y="641" font-size="11.5" fill="#f0f0f0" font-weight="bold" textLength="80" lengthAdjust="spacingAndGlyphs" filter="url(#tshadow)" >Add to Viewport</text><text x="1128.5" y="656" font-size="10.5" fill="#a3ab92" font-style="italic" textLength="100" lengthAdjust="spacingAndGlyphs" >Target is User Widget</text><path d="M1114.2,670 L1118,670 L1123,675.4 Q1123.5,676 1123,676.6 L1118,682 L1114.2,682 Q1113,682 1113,680.8 L1113,671.2 Q1113,670 1114.2,670 Z" fill="#fff"/><path d="M1237.0,670.8 L1240.3,670.8 L1244.7,676 L1240.3,681.2 L1237.0,681.2 Q1236.3,681.2 1236.3,680.5 L1236.3,671.5 Q1236.3,670.8 1237.0,670.8 Z" fill="none" stroke="#fff" stroke-width="1.4" stroke-linejoin="round"/><path d="M1122,696.4 L1125.4,699 L1122,701.6 Z" fill="#0ba6ef" opacity="0.75"/><circle cx="1117.8" cy="699" r="4.9" fill="#0ba6ef"/><text x="1130.5" y="703" font-size="10.5" fill="#f0f0f0" textLength="30" lengthAdjust="spacingAndGlyphs" filter="url(#tshadow)" >Target</text><path d="M1174,715.5 h10.5 l-5.25,7.5 z" fill="#e0e0e0"/><path d="M167,354 H176" stroke="#f4f4f4" stroke-width="2.4" opacity="0.32"/><path d="M164,377 H176" stroke="#0a4fbb" stroke-width="1.9" opacity="0.32"/><path d="M164,400 H176" stroke="#0a4fbb" stroke-width="1.9" opacity="0.32"/><path d="M263,270 H273" stroke="#f4f4f4" stroke-width="2.4" opacity="0.32"/><path d="M362,270 H372" stroke="#f4f4f4" stroke-width="2.4" opacity="0.32"/><path d="M362,294 H372" stroke="#f4f4f4" stroke-width="2.4" opacity="0.32"/><path d="M362,319 H372" stroke="#f4f4f4" stroke-width="2.4" opacity="0.32"/><path d="M893,228 H903" stroke="#f4f4f4" stroke-width="2.4" opacity="0.32"/><path d="M893,251.5 H903" stroke="#0ba6ef" stroke-width="1.9" opacity="0.32"/><path d="M1074,228 H1085" stroke="#f4f4f4" stroke-width="2.4" opacity="0.32"/><path d="M1186,228 H1197" stroke="#f4f4f4" stroke-width="2.4" opacity="0.32"/><path d="M1186,251 H1197" stroke="#0ba6ef" stroke-width="1.9" opacity="0.32"/><path d="M763,437.5 H773" stroke="#0ba6ef" stroke-width="1.9" opacity="0.32"/><path d="M809,410 H819" stroke="#f4f4f4" stroke-width="2.4" opacity="0.32"/><path d="M953,410 H963" stroke="#f4f4f4" stroke-width="2.4" opacity="0.32"/><path d="M809,433 H819" stroke="#0ba6ef" stroke-width="1.9" opacity="0.32"/><path d="M1001,521 H1011" stroke="#0ba6ef" stroke-width="1.9" opacity="0.32"/><path d="M1256,410.5 H1266" stroke="#f4f4f4" stroke-width="2.4" opacity="0.32"/><path d="M1256,433 H1266" stroke="#0ba6ef" stroke-width="1.9" opacity="0.32"/><path d="M557,676 H567" stroke="#f4f4f4" stroke-width="2.4" opacity="0.32"/><path d="M804,676 H813" stroke="#f4f4f4" stroke-width="2.4" opacity="0.32"/><path d="M802,699.5 H813" stroke="#0ba6ef" stroke-width="1.9" opacity="0.32"/><path d="M557,760 H567" stroke="#0a4fbb" stroke-width="1.9" opacity="0.32"/><path d="M557,782 H567" stroke="#0a4fbb" stroke-width="1.9" opacity="0.32"/><path d="M1102,676 H1113" stroke="#f4f4f4" stroke-width="2.4" opacity="0.32"/><path d="M1102,699 H1113" stroke="#0ba6ef" stroke-width="1.9" opacity="0.32"/><g transform="translate(1477,364.2)"><path d="M-1.3,2.2 L-4.8,2.2 L-6.3,10 L-4.5,10 L-5.8,17.3 L-1.5,8 L-3.2,8 Z" fill="#ececec" stroke="#111" stroke-width="0.9" stroke-linejoin="round"/><rect x="0.9" y="0.9" width="16.9" height="14.8" rx="3" fill="#000" stroke="#151515" stroke-width="3.4"/><rect x="0.9" y="0.9" width="16.9" height="14.8" rx="3" fill="#000" stroke="#e4e4e4" stroke-width="1.7"/><path d="M1.9,14.8 L1.9,2 L13.5,2 Q7,3.8 5.6,14.8 Z" fill="#4e4e4e"/><path d="M7.3,14.8 Q8.6,5 13.6,2.2" fill="none" stroke="#6a6a6a" stroke-width="0.8"/><path d="M6.6,16.4 H10.6 L11.2,19 H15.4 Q15.9,19 15.9,19.6 V20.8 Q15.9,21.4 15.3,21.4 H3.2 Q2.6,21.4 2.6,20.8 V19.6 Q2.6,19 3.2,19 H6 Z" fill="#f2f2f2" stroke="#111" stroke-width="0.8"/></g><g transform="translate(805,630.3)"><path d="M-1.3,2.2 L-4.8,2.2 L-6.3,10 L-4.5,10 L-5.8,17.3 L-1.5,8 L-3.2,8 Z" fill="#ececec" stroke="#111" stroke-width="0.9" stroke-linejoin="round"/><rect x="0.9" y="0.9" width="16.9" height="14.8" rx="3" fill="#000" stroke="#151515" stroke-width="3.4"/><rect x="0.9" y="0.9" width="16.9" height="14.8" rx="3" fill="#000" stroke="#e4e4e4" stroke-width="1.7"/><path d="M1.9,14.8 L1.9,2 L13.5,2 Q7,3.8 5.6,14.8 Z" fill="#4e4e4e"/><path d="M7.3,14.8 Q8.6,5 13.6,2.2" fill="none" stroke="#6a6a6a" stroke-width="0.8"/><path d="M6.6,16.4 H10.6 L11.2,19 H15.4 Q15.9,19 15.9,19.6 V20.8 Q15.9,21.4 15.3,21.4 H3.2 Q2.6,21.4 2.6,20.8 V19.6 Q2.6,19 3.2,19 H6 Z" fill="#f2f2f2" stroke="#111" stroke-width="0.8"/></g><g transform="translate(1248,616.2)"><path d="M-1.3,2.2 L-4.8,2.2 L-6.3,10 L-4.5,10 L-5.8,17.3 L-1.5,8 L-3.2,8 Z" fill="#ececec" stroke="#111" stroke-width="0.9" stroke-linejoin="round"/><rect x="0.9" y="0.9" width="16.9" height="14.8" rx="3" fill="#000" stroke="#151515" stroke-width="3.4"/><rect x="0.9" y="0.9" width="16.9" height="14.8" rx="3" fill="#000" stroke="#e4e4e4" stroke-width="1.7"/><path d="M1.9,14.8 L1.9,2 L13.5,2 Q7,3.8 5.6,14.8 Z" fill="#4e4e4e"/><path d="M7.3,14.8 Q8.6,5 13.6,2.2" fill="none" stroke="#6a6a6a" stroke-width="0.8"/><path d="M6.6,16.4 H10.6 L11.2,19 H15.4 Q15.9,19 15.9,19.6 V20.8 Q15.9,21.4 15.3,21.4 H3.2 Q2.6,21.4 2.6,20.8 V19.6 Q2.6,19 3.2,19 H6 Z" fill="#f2f2f2" stroke="#111" stroke-width="0.8"/></g><rect x="7" y="38" width="1558" height="42" fill="#000" fill-opacity="0.55"/><rect x="7" y="79" width="1558" height="1" fill="#000" fill-opacity="0.4"/><polygon points="23.60,50.50 25.89,56.34 32.16,56.72 27.31,60.71 28.89,66.78 23.60,63.40 18.31,66.78 19.89,60.71 15.04,56.72 21.31,56.34" fill="none" stroke="#c4c4c4" stroke-width="1.25" stroke-linejoin="miter"/><rect x="40" y="41" width="1" height="36" fill="#777"/><rect x="127" y="41" width="1" height="36" fill="#777"/><path d="M53,58 L62.5,47 V53.5 H69 V63 H62.5 V69.5 Z" fill="#8e8e8e"/><path d="M112,58 L102.5,47 V53.5 H95 V63 H102.5 V69.5 Z" fill="#8e8e8e"/><g transform="translate(141.3,47.2) scale(1.0)"><path d="M0.8,21.5 Q2.5,24.5 5.5,22.5 Q7,21 8.5,16 L12,5.5 Q14,0.5 18.5,1.3" fill="none" stroke="url(#fgradL)" stroke-width="2.9" stroke-linecap="round"/><path d="M7.6,8.6 H15.2" stroke="url(#fgradL)" stroke-width="2.2"/><circle cx="1.6" cy="21.2" r="1.9" fill="url(#fgradL)"/><circle cx="18.2" cy="1.7" r="1.9" fill="url(#fgradL)"/></g><text x="177.5" y="64.5" font-size="19" fill="#9a9a9a" textLength="150" lengthAdjust="spacingAndGlyphs" >DialogueLuaState</text><path d="M338.5,51.5 l5.5,6.5 l-5.5,6.5" fill="none" stroke="#e0e0e0" stroke-width="1.5"/><text x="354.5" y="64.5" font-size="19" fill="#9a9a9a" textLength="125" lengthAdjust="spacingAndGlyphs" >Open Dialogue</text><text x="1490.6" y="63" font-size="20.5" fill="#323232" font-weight="bold" textLength="44.4" lengthAdjust="spacingAndGlyphs" >Zoom</text><rect x="1542" y="55.5" width="5.5" height="2.6" fill="#2e2e2e"/><text x="1550" y="63" font-size="20.5" fill="#323232" font-weight="bold" textLength="7.5" lengthAdjust="spacingAndGlyphs" >1</text><text x="1264" y="825" font-size="65" fill="#ffffff" font-weight="bold" textLength="289" lengthAdjust="spacingAndGlyphs" opacity="0.16" >BLUEPRINT</text><path d="M5.8,19.3 Q8.5,11.5 15.4,8.1 L16.2,10.5 L16.2,21.3 Q17.5,22.8 19.7,22.3 L19.6,11.2 Q21.5,9.5 26.7,8.2 Q24.4,10.5 24.2,12 L24.1,20.8 Q26,21 28.2,20.2 Q25,25 22,26.2 L20.5,24.5 Q19,26.5 17.7,26.8 Q14.5,26.5 12.7,25.4 Q11,24.5 11,23.5 L11.8,14.6 Q8,15.8 5.8,19.3 Z" fill="#f4f4f4"/><path d="M41,36 V18 Q41,15 44,15 H188 Q191,15 191,18 V36 Z" fill="url(#tabbg)"/><rect x="43.5" y="15" width="145" height="1" fill="#b09838"/><g transform="translate(48.5,18.5) scale(0.66)"><path d="M0.8,21.5 Q2.5,24.5 5.5,22.5 Q7,21 8.5,16 L12,5.5 Q14,0.5 18.5,1.3" fill="none" stroke="url(#fgradL)" stroke-width="2.9" stroke-linecap="round"/><path d="M7.6,8.6 H15.2" stroke="url(#fgradL)" stroke-width="2.2"/><circle cx="1.6" cy="21.2" r="1.9" fill="url(#fgradL)"/><circle cx="18.2" cy="1.7" r="1.9" fill="url(#fgradL)"/></g><text x="69" y="29" font-size="12.5" fill="#e8e8e8" textLength="79" lengthAdjust="spacingAndGlyphs" filter="url(#tshadow)" >Open Dialogue</text><path d="M175,22 l6,6 M181,22 l-6,6" stroke="#8a8a8a" stroke-width="1.2"/><rect x="1475.5" y="5.5" width="24" height="14.5" rx="1" fill="url(#btnbg)" stroke="#9a9a9a" stroke-width="1"/><rect x="1501.5" y="5.5" width="21" height="14.5" rx="1" fill="url(#btnbg)" stroke="#9a9a9a" stroke-width="1"/><rect x="1524.5" y="5.5" width="40" height="14.5" rx="1" fill="url(#btnbg)" stroke="#9a9a9a" stroke-width="1"/><rect x="1482" y="12.5" width="10" height="3.5" rx="1" fill="#fff"/><path d="M1506,8.5 H1518 V17 H1506 Z M1508.4,12 V15.2 H1515.8 V12 Z" fill="#fff" fill-rule="evenodd"/><path d="M1539,8.3 l9,8.4 M1548,8.3 l-9,8.4" stroke="#111" stroke-width="4.2"/><path d="M1539,8.3 l9,8.4 M1548,8.3 l-9,8.4" stroke="#fff" stroke-width="2.6"/></svg></body></html>
